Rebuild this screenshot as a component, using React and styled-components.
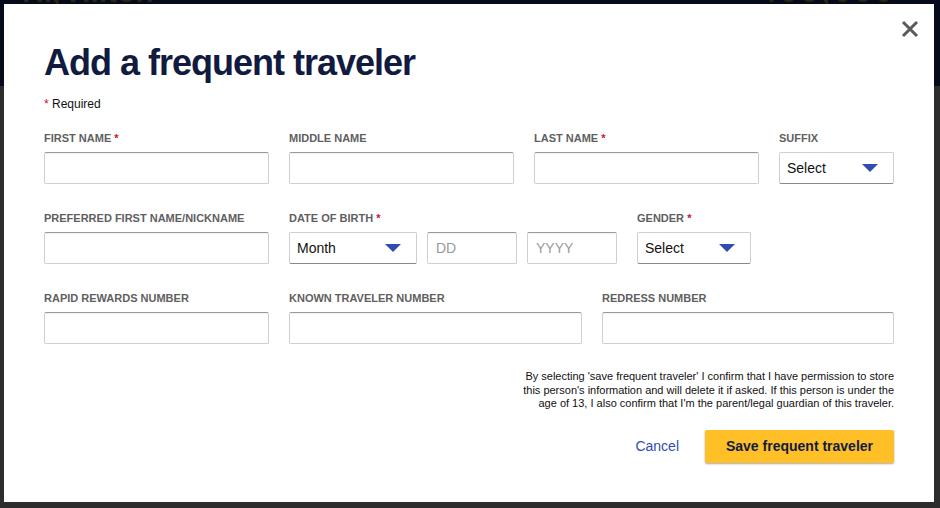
import React from "react";
import styled, { createGlobalStyle } from "styled-components";

const Global = createGlobalStyle`
  html, body { margin: 0; padding: 0; }
  body {
    width: 940px; height: 508px; overflow: hidden;
    background: #2d2d2d;
    font-family: "Liberation Sans", Arial, sans-serif;
  }
  * { box-sizing: border-box; }
`;

const Page = styled.div`
  position: relative;
  width: 940px;
  height: 508px;
  background: #2d2d2d;
`;

const Header = styled.div`
  height: 86px;
  background: #060b1c;
  display: flex;
  justify-content: space-between;
  align-items: flex-start;
  padding: 0 44px 0 22px;
  overflow: hidden;
`;

const HeaderText = styled.span`
  margin-top: -25px;
  font-size: 30px;
  font-weight: bold;
  color: #2c2611;
  letter-spacing: ${(p) => (p.$wide ? "4px" : "0")};
`;

const Modal = styled.div`
  position: absolute;
  top: 4px;
  left: 4px;
  width: 930px;
  height: 498px;
  background: #fff;
  padding: 39px 40px 39px 40px;
  display: flex;
  flex-direction: column;
`;

const Close = styled.button`
  position: absolute;
  top: 16px;
  right: 15px;
  width: 18px;
  height: 18px;
  padding: 0;
  border: 0;
  background: transparent;
  display: flex;
  align-items: center;
  justify-content: center;
`;

const Title = styled.h1`
  margin: 0;
  font-size: 36px;
  line-height: 40px;
  font-weight: bold;
  letter-spacing: -1px;
  color: #111b40;
`;

const Required = styled.div`
  margin-top: 14px;
  font-size: 12px;
  line-height: 14px;
  color: #111;
`;

const Star = styled.span`
  color: #c8102e;
`;

const Row = styled.div`
  display: grid;
  grid-template-columns: ${(p) => p.$cols};
  column-gap: 20px;
  margin-top: ${(p) => p.$top}px;
`;

const Field = styled.div`
  display: flex;
  flex-direction: column;
`;

const Label = styled.label`
  font-size: 11px;
  line-height: 14px;
  font-weight: bold;
  color: #5f5f5f;
  margin-bottom: 7px;
  white-space: nowrap;
`;

const Input = styled.div`
  height: 32px;
  border: 1px solid #cfcfcf;
  border-top-color: #9a9a9a;
  box-shadow: inset 0 1px 1px rgba(0, 0, 0, 0.06);
  border-radius: 2px;
  display: flex;
  align-items: center;
  padding-left: 8px;
  font-size: 14px;
  color: #9a9a9a;
`;

const Select = styled.div`
  height: 32px;
  border: 1px solid #cfcfcf;
  border-bottom-color: #8a8a8a;
  border-radius: 2px;
  display: flex;
  align-items: center;
  justify-content: space-between;
  padding: 0 15px 0 7px;
  font-size: 14px;
  color: #111;
`;

const Caret = styled.span`
  width: 0;
  height: 0;
  border-left: 8px solid transparent;
  border-right: 8px solid transparent;
  border-top: 8px solid #304cb2;
`;

const DobGroup = styled.div`
  display: grid;
  grid-template-columns: 128px 90px 90px;
  column-gap: 10px;
`;

const Disclaimer = styled.p`
  margin: 26px 0 0 auto;
  width: 380px;
  text-align: right;
  font-size: 11px;
  line-height: 13.5px;
  color: #111;
`;

const Actions = styled.div`
  margin-top: 19px;
  display: flex;
  justify-content: flex-end;
  align-items: center;
  gap: 26px;
`;

const Cancel = styled.button`
  border: 0;
  background: transparent;
  padding: 0;
  font-family: inherit;
  font-size: 14px;
  color: #304cb2;
`;

const Save = styled.button`
  width: 189px;
  height: 33px;
  border: 0;
  border-radius: 2px;
  background: #ffbf27;
  box-shadow: 0 1px 2px rgba(0, 0, 0, 0.35);
  font-family: inherit;
  font-size: 14px;
  font-weight: bold;
  color: #111b40;
`;

const Req = ({ children }) => (
  <>
    {children} <Star>*</Star>
  </>
);

const SelectBox = ({ value }) => (
  <Select>
    <span>{value}</span>
    <Caret />
  </Select>
);

export default function App() {
  return (
    <>
      <Global />
      <Page>
        <Header>
          <HeaderText>Hi, Hilton</HeaderText>
          <HeaderText $wide>400,000</HeaderText>
        </Header>
        <Modal>
          <Close aria-label="Close">
            <svg width="18" height="18" viewBox="0 0 18 18">
              <path d="M2 2 L16 16 M16 2 L2 16" stroke="#5a5a5a" strokeWidth="3" strokeLinecap="butt" />
            </svg>
          </Close>
          <Title>Add a frequent traveler</Title>
          <Required>
            <Star>*</Star> Required
          </Required>

          <Row $cols="225px 225px 225px 115px" $top={20}>
            <Field>
              <Label><Req>FIRST NAME</Req></Label>
              <Input />
            </Field>
            <Field>
              <Label>MIDDLE NAME</Label>
              <Input />
            </Field>
            <Field>
              <Label><Req>LAST NAME</Req></Label>
              <Input />
            </Field>
            <Field>
              <Label>SUFFIX</Label>
              <SelectBox value="Select" />
            </Field>
          </Row>

          <Row $cols="225px 328px 114px" $top={27}>
            <Field>
              <Label>PREFERRED FIRST NAME/NICKNAME</Label>
              <Input />
            </Field>
            <Field>
              <Label><Req>DATE OF BIRTH</Req></Label>
              <DobGroup>
                <SelectBox value="Month" />
                <Input>DD</Input>
                <Input>YYYY</Input>
              </DobGroup>
            </Field>
            <Field>
              <Label><Req>GENDER</Req></Label>
              <SelectBox value="Select" />
            </Field>
          </Row>

          <Row $cols="225px 293px 292px" $top={27}>
            <Field>
              <Label>RAPID REWARDS NUMBER</Label>
              <Input />
            </Field>
            <Field>
              <Label>KNOWN TRAVELER NUMBER</Label>
              <Input />
            </Field>
            <Field>
              <Label>REDRESS NUMBER</Label>
              <Input />
            </Field>
          </Row>

          <Disclaimer>
            By selecting 'save frequent traveler' I confirm that I have permission to store
            this person's information and will delete it if asked. If this person is under the
            age of 13, I also confirm that I'm the parent/legal guardian of this traveler.
          </Disclaimer>

          <Actions>
            <Cancel>Cancel</Cancel>
            <Save>Save frequent traveler</Save>
          </Actions>
        </Modal>
      </Page>
    </>
  );
}
